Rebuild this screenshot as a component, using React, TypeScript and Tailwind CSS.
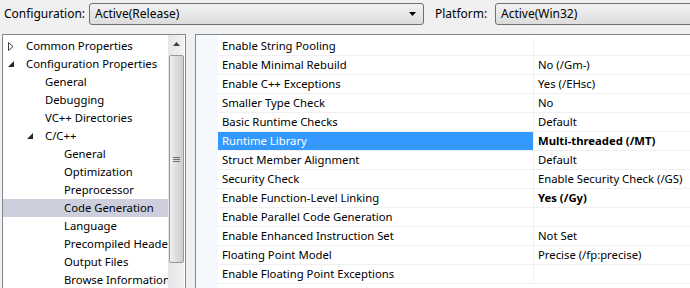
import React from "react";

const font = { fontFamily: '"Noto Sans", "Open Sans", sans-serif' };

type TreeItem = { label: string; indent: number; expander?: "open" | "closed"; selected?: boolean };

const tree: TreeItem[] = [
  { label: "Common Properties", indent: 0, expander: "closed" },
  { label: "Configuration Properties", indent: 0, expander: "open" },
  { label: "General", indent: 1 },
  { label: "Debugging", indent: 1 },
  { label: "VC++ Directories", indent: 1 },
  { label: "C/C++", indent: 1, expander: "open" },
  { label: "General", indent: 2 },
  { label: "Optimization", indent: 2 },
  { label: "Preprocessor", indent: 2 },
  { label: "Code Generation", indent: 2, selected: true },
  { label: "Language", indent: 2 },
  { label: "Precompiled Headers", indent: 2 },
  { label: "Output Files", indent: 2 },
  { label: "Browse Information", indent: 2 },
];

const props: { label: string; value: string; bold?: boolean; selected?: boolean }[] = [
  { label: "Enable String Pooling", value: "" },
  { label: "Enable Minimal Rebuild", value: "No (/Gm-)" },
  { label: "Enable C++ Exceptions", value: "Yes (/EHsc)" },
  { label: "Smaller Type Check", value: "No" },
  { label: "Basic Runtime Checks", value: "Default" },
  { label: "Runtime Library", value: "Multi-threaded (/MT)", bold: true, selected: true },
  { label: "Struct Member Alignment", value: "Default" },
  { label: "Security Check", value: "Enable Security Check (/GS)" },
  { label: "Enable Function-Level Linking", value: "Yes (/Gy)", bold: true },
  { label: "Enable Parallel Code Generation", value: "" },
  { label: "Enable Enhanced Instruction Set", value: "Not Set" },
  { label: "Floating Point Model", value: "Precise (/fp:precise)" },
  { label: "Enable Floating Point Exceptions", value: "" },
];

function Expander({ kind }: { kind: "open" | "closed" }) {
  if (kind === "closed")
    return (
      <svg width="8" height="9" viewBox="0 0 8 9">
        <path d="M1.5 0.5 L6 4.5 L1.5 8.5 Z" fill="none" stroke="#404040" strokeWidth="1" />
      </svg>
    );
  return (
    <svg width="8" height="8" viewBox="0 0 8 8">
      <path d="M7 1 L7 7 L1 7 Z" fill="#262626" />
    </svg>
  );
}

function Combo({ text, width }: { text: string; width: string }) {
  return (
    <div
      className={`${width} shrink-0 h-[22px] flex items-center rounded-[3px] border border-[#707070] bg-gradient-to-b from-[#f2f2f2] to-[#dcdcdc] pl-[5px] pr-[6px] text-[12px] text-black`}
    >
      <span className="flex-1 leading-none">{text}</span>
      <svg width="7" height="4" viewBox="0 0 7 4" className="mr-[1px]">
        <path d="M0 0 L7 0 L3.5 4 Z" fill="#000" />
      </svg>
    </div>
  );
}

export default function App() {
  return (
    <div className="w-[690px] h-[288px] overflow-hidden bg-[#f0f0f0] text-[11.3px] text-black" style={font}>
      <div className="flex items-center h-[28px] text-[12px]">
        <span className="ml-[4px] w-[85px] shrink-0">Configuration:</span>
        <Combo text="Active(Release)" width="w-[335px]" />
        <span className="ml-[11px] w-[60px] shrink-0">Platform:</span>
        <Combo text="Active(Win32)" width="w-[220px]" />
      </div>
      <div className="flex mt-[6px] h-[260px]">
        <div className="ml-[2px] w-[184px] border border-[#828790] bg-white flex">
          <div className="flex-1 overflow-hidden pt-[2px]">
            {tree.map((t, i) => (
              <div
                key={i}
                className={`h-[18px] flex items-center whitespace-nowrap ${t.selected ? "bg-[#cdd0dc]" : ""}`}
              >
                <div
                  className={`flex items-center justify-center w-[10px] shrink-0 ${
                    t.indent === 0 ? "ml-[3px]" : t.indent === 1 ? "ml-[22px]" : "ml-[41px]"
                  }`}
                >
                  {t.expander ? <Expander kind={t.expander} /> : null}
                </div>
                <span className="ml-[10px] leading-none">{t.label}</span>
              </div>
            ))}
          </div>
          <div className="w-[16px] mr-[1px] shrink-0 bg-gradient-to-r from-[#e6e6e6] to-[#f2f2f2] flex flex-col items-center">
            <div className="h-[18px] w-full flex items-center justify-center">
              <svg width="7" height="4" viewBox="0 0 7 4">
                <path d="M0 4 L7 4 L3.5 0 Z" fill="#404040" />
              </svg>
            </div>
            <div className="mt-[2px] w-[15px] h-[208px] rounded-[2px] border border-[#979797] bg-gradient-to-r from-[#f0f0f0] via-[#dcdcdc] to-[#cfcfcf] flex items-center justify-center">
              <div className="flex flex-col gap-[1px]">
                <div className="w-[7px] h-[1px] bg-[#6f6f6f]" />
                <div className="w-[7px] h-[1px] bg-[#6f6f6f]" />
                <div className="w-[7px] h-[1px] bg-[#6f6f6f]" />
              </div>
            </div>
          </div>
        </div>
        <div className="ml-[9px] flex-1 border border-r-0 border-[#828790] bg-white flex">
          <div className="w-[22px] shrink-0 bg-[#f5f8fd]" />
          <div className="flex-1 pt-[2px]">
            {props.map((p, i) => (
              <div key={i} className="h-[19px] flex border-b border-[#f0f0f0]">
                <div
                  className={`w-[315px] shrink-0 pl-[4px] flex items-center whitespace-nowrap ${
                    p.selected ? "bg-[#3399ff] text-white" : ""
                  }`}
                >
                  {p.label}
                </div>
                <div
                  className={`flex-1 pl-[4px] flex items-center whitespace-nowrap border-l border-[#f0f0f0] ${
                    p.bold ? "font-bold" : ""
                  }`}
                >
                  {p.value}
                </div>
              </div>
            ))}
          </div>
        </div>
      </div>
    </div>
  );
}
